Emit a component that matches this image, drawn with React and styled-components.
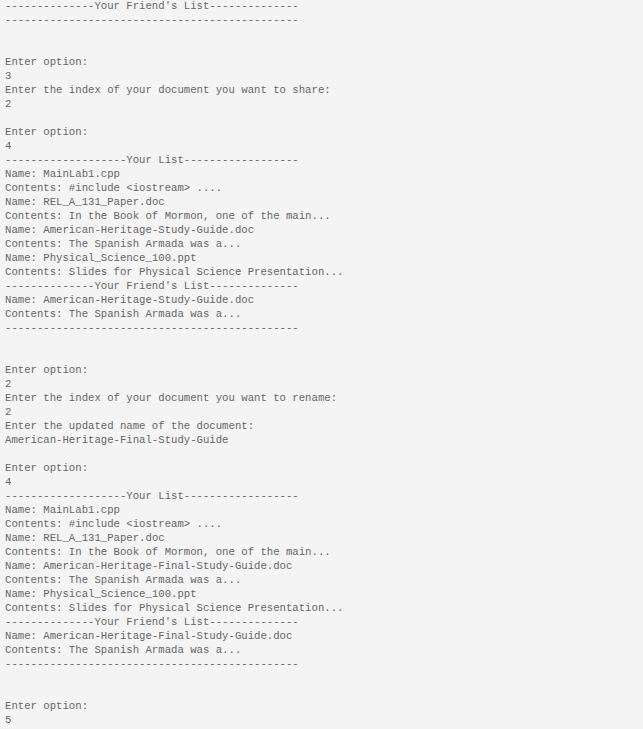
import styled, { createGlobalStyle } from "styled-components";

const GlobalStyle = createGlobalStyle`
  html, body {
    margin: 0;
    padding: 0;
    background: #f4f4f4;
  }
`;

const DASH = "-".repeat(46);

const myDocs = (renamed) => [
  { name: "MainLab1.cpp", contents: "#include <iostream> ...." },
  { name: "REL_A_131_Paper.doc", contents: "In the Book of Mormon, one of the main..." },
  { name: renamed, contents: "The Spanish Armada was a..." },
  { name: "Physical_Science_100.ppt", contents: "Slides for Physical Science Presentation..." },
];

const App = () => {
  return (
    <>
      <GlobalStyle />
      <Console>
        <Line>--------------Your Friend's List--------------</Line>
        <Line>{DASH}</Line>
        <Blank lines={2} />

        <Prompt label="Enter option:" value="3" />
        <Prompt label="Enter the index of your document you want to share:" value="2" />
        <Blank />

        <Prompt label="Enter option:" value="4" />
        <Listing
          docs={myDocs("American-Heritage-Study-Guide.doc")}
          friend="American-Heritage-Study-Guide.doc"
        />
        <Blank lines={2} />

        <Prompt label="Enter option:" value="2" />
        <Prompt label="Enter the index of your document you want to rename:" value="2" />
        <Prompt label="Enter the updated name of the document:" value="American-Heritage-Final-Study-Guide" />
        <Blank />

        <Prompt label="Enter option:" value="4" />
        <Listing
          docs={myDocs("American-Heritage-Final-Study-Guide.doc")}
          friend="American-Heritage-Final-Study-Guide.doc"
        />
        <Blank lines={2} />

        <Prompt label="Enter option:" value="5" />
      </Console>
    </>
  );
};

const Prompt = ({ label, value }) => (
  <Block>
    <Line>{label}</Line>
    <Line>{value}</Line>
  </Block>
);

const Listing = ({ docs, friend }) => (
  <Block>
    <Line>-------------------Your List------------------</Line>
    {docs.map((d) => (
      <Block key={d.name + d.contents}>
        <Line>Name: {d.name}</Line>
        <Line>Contents: {d.contents}</Line>
      </Block>
    ))}
    <Line>--------------Your Friend's List--------------</Line>
    <Block>
      <Line>Name: {friend}</Line>
      <Line>Contents: The Spanish Armada was a...</Line>
    </Block>
    <Line>{DASH}</Line>
  </Block>
);

const Console = styled.div`
  display: flex;
  flex-direction: column;
  padding: 0 5px;
  margin-top: -1px;
  font-family: "Liberation Mono", "Courier New", monospace;
  font-size: 10.65px;
  line-height: 14px;
  color: #666666;
`;

const Block = styled.div`
  display: flex;
  flex-direction: column;
`;

const Line = styled.div`
  height: 14px;
  white-space: pre;
`;

const Blank = styled.div`
  height: ${(props) => (props.lines || 1) * 14}px;
`;

export default App;
